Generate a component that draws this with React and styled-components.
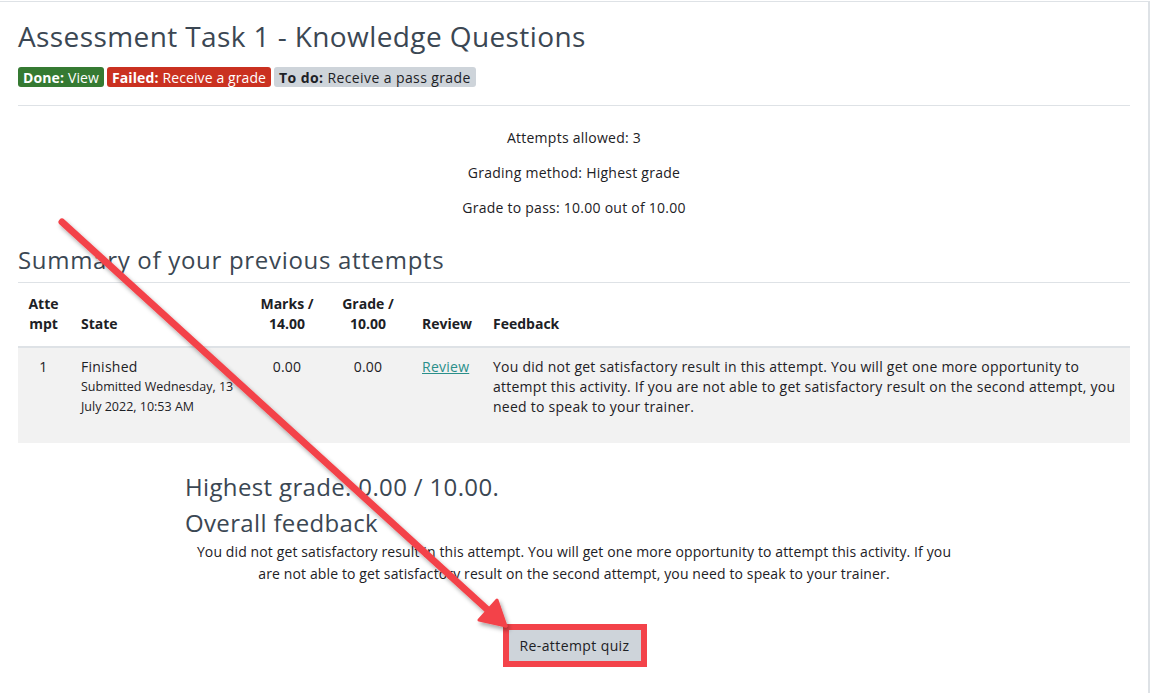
import React from 'react';
import styled, { createGlobalStyle } from 'styled-components';

const GlobalStyle = createGlobalStyle`
  html, body {
    margin: 0;
    padding: 0;
    background: #ffffff;
  }
  body {
    font-family: "Open Sans", "Liberation Sans", sans-serif;
    font-size: 14px;
    letter-spacing: 0.25px;
    color: #1d2125;
  }
`;

const Page = styled.div`
  position: relative;
  width: 1152px;
  height: 693px;
  overflow: hidden;
  padding-top: 1px;
  box-sizing: border-box;
`;

const Card = styled.div`
  width: 1151px;
  margin-left: -1px;
  min-height: 700px;
  box-sizing: border-box;
  border-top: 1px solid #dee2e6;
  border-right: 2px solid #dee2e6;
  padding: 17px 18px 0 19px;
`;

const Title = styled.h2`
  margin: 0;
  font-size: 28px;
  font-weight: 400;
  letter-spacing: 0.4px;
  line-height: 35px;
  color: #3b4753;
`;

const Badges = styled.div`
  display: flex;
  gap: 3px;
  margin-top: 13px;
`;

const Badge = styled.span`
  display: inline-flex;
  align-items: center;
  height: 20px;
  padding: 0 5px;
  border-radius: 3px;
  font-size: 14px;
  letter-spacing: ${p => p.$ls || '0.1px'};
  background: ${p => p.$bg};
  color: ${p => p.$fg || '#ffffff'};

  b {
    font-weight: 700;
    margin-right: 4px;
  }
`;

const Rule = styled.hr`
  margin: 18px 0 0;
  border: 0;
  border-top: 1px solid #dee2e6;
`;

const Info = styled.div`
  display: flex;
  flex-direction: column;
  align-items: center;
  gap: 15px;
  margin-top: 22px;
  line-height: 20px;
`;

const SectionHeading = styled.h3`
  margin: 26px 0 0;
  font-size: 24px;
  font-weight: 400;
  letter-spacing: 0.7px;
  line-height: 32px;
  color: #3b4753;
`;

const Table = styled.table`
  width: 100%;
  margin-top: 6px;
  border-collapse: collapse;
  table-layout: fixed;
  line-height: 20px;
`;

const Th = styled.th`
  width: ${p => (p.$w ? `${p.$w}px` : 'auto')};
  padding: 11px ${p => p.$px || 12}px 12px;
  border-top: 1px solid #dee2e6;
  border-bottom: 2px solid #dee2e6;
  text-align: ${p => p.$align || 'left'};
  vertical-align: bottom;
  font-weight: 700;
  letter-spacing: 0;
  word-break: ${p => (p.$split ? 'break-all' : 'normal')};
`;

const Td = styled.td`
  padding: 9px ${p => p.$px || 12}px;
  background: #f2f2f2;
  text-align: ${p => p.$align || 'left'};
  vertical-align: top;
`;

const Sub = styled.div`
  font-size: 12.5px;
  letter-spacing: 0;
`;

const ReviewLink = styled.a`
  color: #2a8f8a;
  text-decoration: underline;
`;

const FeedbackText = styled.p`
  margin: 0 0 17px;
`;

const Result = styled.div`
  width: 778px;
  margin: 26px auto 0;
`;

const ResultHeading = styled.h3`
  margin: 0;
  font-size: 24px;
  font-weight: 400;
  letter-spacing: 0.35px;
  line-height: 36px;
  color: #3b4753;
`;

const OverallText = styled.p`
  margin: 0;
  text-align: center;
  letter-spacing: 0.12px;
  line-height: 22px;
`;

const ButtonRow = styled.div`
  display: flex;
  justify-content: center;
  margin-top: 45px;
  padding-left: 1px;
`;

const Button = styled.button`
  height: 31px;
  width: 132px;
  padding: 0;
  border: 0;
  border-radius: 0;
  background: #ced4da;
  color: #1d2125;
  font-family: inherit;
  font-size: 14px;
  letter-spacing: 0.4px;
  outline: 6px solid #f3434a;
`;

const Annotation = styled.svg`
  position: absolute;
  left: 0;
  top: 0;
  pointer-events: none;
`;

const columns = [
  { key: 'attempt', label: 'Attempt', w: 31, px: 10, align: 'center', split: true },
  { key: 'state', label: 'State', w: 155 },
  { key: 'marks', label: <>Marks /<br />14.00</>, w: 54, align: 'center' },
  { key: 'grade', label: <>Grade /<br />10.00</>, w: 60, align: 'center' },
  { key: 'review', label: 'Review', w: 47 },
  { key: 'feedback', label: 'Feedback' },
];

const feedback =
  'You did not get satisfactory result in this attempt. You will get one more opportunity to attempt this activity. If you are not able to get satisfactory result on the second attempt, you need to speak to your trainer.';

export default function App() {
  return (
    <Page>
      <GlobalStyle />
      <Card>
        <Title>Assessment Task 1 - Knowledge Questions</Title>
        <Badges>
          <Badge $bg="#357a32"><b>Done:</b>View</Badge>
          <Badge $bg="#ca3120"><b>Failed:</b>Receive a grade</Badge>
          <Badge $bg="#ced4da" $fg="#1d2125" $ls="0.4px"><b>To do:</b>Receive a pass grade</Badge>
        </Badges>
        <Rule />
        <Info>
          <div>Attempts allowed: 3</div>
          <div>Grading method: Highest grade</div>
          <div>Grade to pass: 10.00 out of 10.00</div>
        </Info>
        <SectionHeading>Summary of your previous attempts</SectionHeading>
        <Table>
          <thead>
            <tr>
              {columns.map(c => (
                <Th key={c.key} $w={c.w} $px={c.px} $align={c.align} $split={c.split}>{c.label}</Th>
              ))}
            </tr>
          </thead>
          <tbody>
            <tr>
              <Td $align="center" $px={10}>1</Td>
              <Td>
                Finished
                <Sub>Submitted Wednesday, 13 July 2022, 10:53 AM</Sub>
              </Td>
              <Td $align="center">0.00</Td>
              <Td $align="center">0.00</Td>
              <Td><ReviewLink href="#">Review</ReviewLink></Td>
              <Td><FeedbackText>{feedback}</FeedbackText></Td>
            </tr>
          </tbody>
        </Table>
        <Result>
          <ResultHeading>Highest grade: 0.00 / 10.00.</ResultHeading>
          <ResultHeading>Overall feedback</ResultHeading>
          <OverallText>{feedback}</OverallText>
        </Result>
        <ButtonRow>
          <Button>Re-attempt quiz</Button>
        </ButtonRow>
      </Card>
      <Annotation width="1152" height="693">
        <defs>
          <filter id="shadow" x="-10%" y="-10%" width="120%" height="120%">
            <feDropShadow dx="2" dy="3" stdDeviation="2" floodColor="#000" floodOpacity="0.35" />
          </filter>
        </defs>
        <g filter="url(#shadow)" fill="#f3434a" stroke="#f3434a">
          <line x1="62" y1="222" x2="490" y2="612" strokeWidth="7" strokeLinecap="round" />
          <polygon points="506,626 479,620 497,600" strokeWidth="3" strokeLinejoin="round" />
        </g>
      </Annotation>
    </Page>
  );
}
